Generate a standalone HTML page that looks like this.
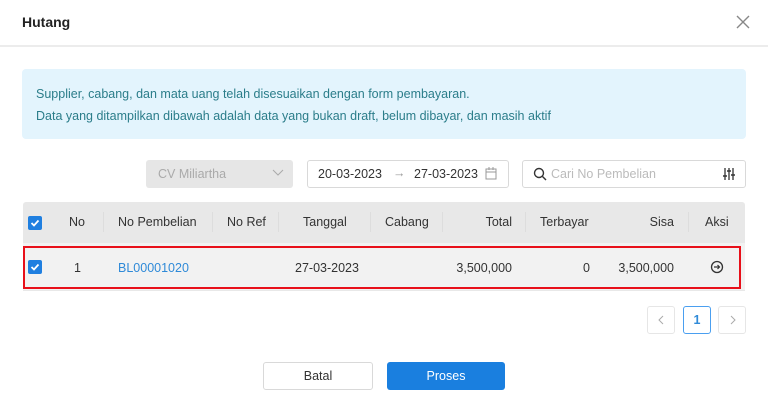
<!DOCTYPE html>
<html><head><style>
*{box-sizing:border-box;margin:0;padding:0}
body{width:768px;height:412px;background:#fff;font-family:"Liberation Sans",sans-serif;font-size:12.5px;color:#333;position:relative;overflow:hidden}
.a{position:absolute}
.t{white-space:nowrap}
.box{border:1px solid #d9d9d9;border-radius:3px;background:#fff}
.cb{width:14px;height:14px;background:#1f7fe0;border-radius:2px}
.sep{width:1px;height:20px;background:#ddd;top:212px}
</style></head><body>
<div class="a t" style="left:22px;top:14px;font-size:14px;font-weight:bold;color:#222">Hutang</div>
<svg class="a" style="left:736px;top:15px" width="14" height="14"><path d="M1 1L13 13M13 1L1 13" stroke="#888" stroke-width="1.4"/></svg>
<div class="a" style="left:0;top:45px;width:768px;height:2px;background:#ececec"></div>
<div class="a" style="left:22px;top:69px;width:724px;height:70px;background:#e3f4fd;border-radius:4px"></div>
<div class="a t" style="left:36px;top:87px;color:#2b7d8a">Supplier, cabang, dan mata uang telah disesuaikan dengan form pembayaran.</div>
<div class="a t" style="left:36px;top:109px;color:#2b7d8a">Data yang ditampilkan dibawah adalah data yang bukan draft, belum dibayar, dan masih aktif</div>

<div class="a" style="left:146px;top:160px;width:147px;height:28px;background:#e6e6e6;border-radius:3px"></div>
<div class="a t" style="left:158px;top:167px;color:#aaa">CV Miliartha</div>
<svg class="a" style="left:272px;top:169px" width="12" height="8"><path d="M1 1L6 6L11 1" stroke="#aaa" fill="none"/></svg>
<div class="a box" style="left:307px;top:160px;width:202px;height:28px"></div>
<div class="a t" style="left:318px;top:167px;color:#333">20-03-2023</div>
<div class="a t" style="left:393px;top:166px;color:#999">→</div>
<div class="a t" style="left:414px;top:167px;color:#333">27-03-2023</div>
<svg class="a" style="left:485px;top:167px" width="12" height="13"><rect x="1" y="2" width="10" height="10" fill="none" stroke="#999"/><path d="M1 5H11M4 0V3M8 0V3" stroke="#999"/></svg>
<div class="a box" style="left:522px;top:160px;width:224px;height:28px"></div>
<svg class="a" style="left:533px;top:167px" width="14" height="14"><circle cx="6" cy="6" r="4.5" fill="none" stroke="#333" stroke-width="1.4"/><path d="M9.5 9.5L13 13" stroke="#333" stroke-width="1.4"/></svg>
<div class="a t" style="left:551px;top:167px;color:#bbb">Cari No Pembelian</div>
<svg class="a" style="left:722px;top:167px" width="14" height="14"><path d="M3 1V13M7 1V13M11 1V13" stroke="#333" stroke-width="1.3"/><path d="M1 9H5M5 4H9M9 8H13" stroke="#333" stroke-width="1.5"/></svg>

<div class="a" style="left:23px;top:202px;width:722px;height:41px;background:#e8e8e8;border-radius:3px 3px 0 0"></div>
<div class="a" style="left:23px;top:243px;width:722px;height:48px;background:#f2f2f2;border-bottom:1px solid #e8e8e8"></div>
<div class="a cb" style="left:28px;top:216px"></div>
<svg class="a" style="left:28px;top:216px" width="14" height="14"><path d="M3.5 7L6 9.5L10.5 4.5" stroke="#fff" stroke-width="1.8" fill="none"/></svg>
<div class="a sep" style="left:103px"></div><div class="a sep" style="left:212px"></div><div class="a sep" style="left:278px"></div><div class="a sep" style="left:370px"></div><div class="a sep" style="left:442px"></div><div class="a sep" style="left:525px"></div><div class="a sep" style="left:688px"></div>
<div class="a t" style="left:69px;top:215px">No</div>
<div class="a t" style="left:118px;top:215px">No Pembelian</div>
<div class="a t" style="left:227px;top:215px">No Ref</div>
<div class="a t" style="left:303px;top:215px">Tanggal</div>
<div class="a t" style="left:385px;top:215px">Cabang</div>
<div class="a t" style="left:458px;top:215px;width:54px;text-align:right">Total</div>
<div class="a t" style="left:540px;top:215px">Terbayar</div>
<div class="a t" style="left:620px;top:215px;width:54px;text-align:right">Sisa</div>
<div class="a t" style="left:705px;top:215px">Aksi</div>

<div class="a" style="left:23px;top:246px;width:718px;height:43px;border:2px solid #e8101a"></div>
<div class="a cb" style="left:28px;top:260px"></div>
<svg class="a" style="left:28px;top:260px" width="14" height="14"><path d="M3.5 7L6 9.5L10.5 4.5" stroke="#fff" stroke-width="1.8" fill="none"/></svg>
<div class="a t" style="left:74px;top:261px">1</div>
<div class="a t" style="left:118px;top:261px;color:#2f8ad8">BL00001020</div>
<div class="a t" style="left:295px;top:261px">27-03-2023</div>
<div class="a t" style="left:432px;top:261px;width:80px;text-align:right">3,500,000</div>
<div class="a t" style="left:550px;top:261px;width:40px;text-align:right">0</div>
<div class="a t" style="left:594px;top:261px;width:80px;text-align:right">3,500,000</div>
<svg class="a" style="left:710px;top:260px" width="14" height="14"><circle cx="7" cy="7" r="5.5" fill="none" stroke="#333" stroke-width="1.3"/><path d="M4 7H9.5M7.5 5L9.5 7L7.5 9" stroke="#333" stroke-width="1.2" fill="none"/></svg>

<div class="a box" style="left:647px;top:306px;width:28px;height:28px;border-color:#e6e6e6"></div>
<svg class="a" style="left:657px;top:315px" width="8" height="10"><path d="M6 1L2 5L6 9" stroke="#aaa" fill="none"/></svg>
<div class="a box" style="left:683px;top:306px;width:28px;height:28px;border-color:#4a9ff0"></div>
<div class="a t" style="left:683px;top:313px;width:28px;text-align:center;color:#2f8ad8;font-weight:bold">1</div>
<div class="a box" style="left:718px;top:306px;width:28px;height:28px;border-color:#e6e6e6"></div>
<svg class="a" style="left:729px;top:315px" width="8" height="10"><path d="M2 1L6 5L2 9" stroke="#aaa" fill="none"/></svg>

<div class="a box" style="left:263px;top:362px;width:110px;height:28px"></div>
<div class="a t" style="left:263px;top:369px;width:110px;text-align:center">Batal</div>
<div class="a" style="left:387px;top:362px;width:118px;height:28px;background:#1a7fdf;border-radius:3px"></div>
<div class="a t" style="left:387px;top:369px;width:118px;text-align:center;color:#fff">Proses</div>
</body></html>
